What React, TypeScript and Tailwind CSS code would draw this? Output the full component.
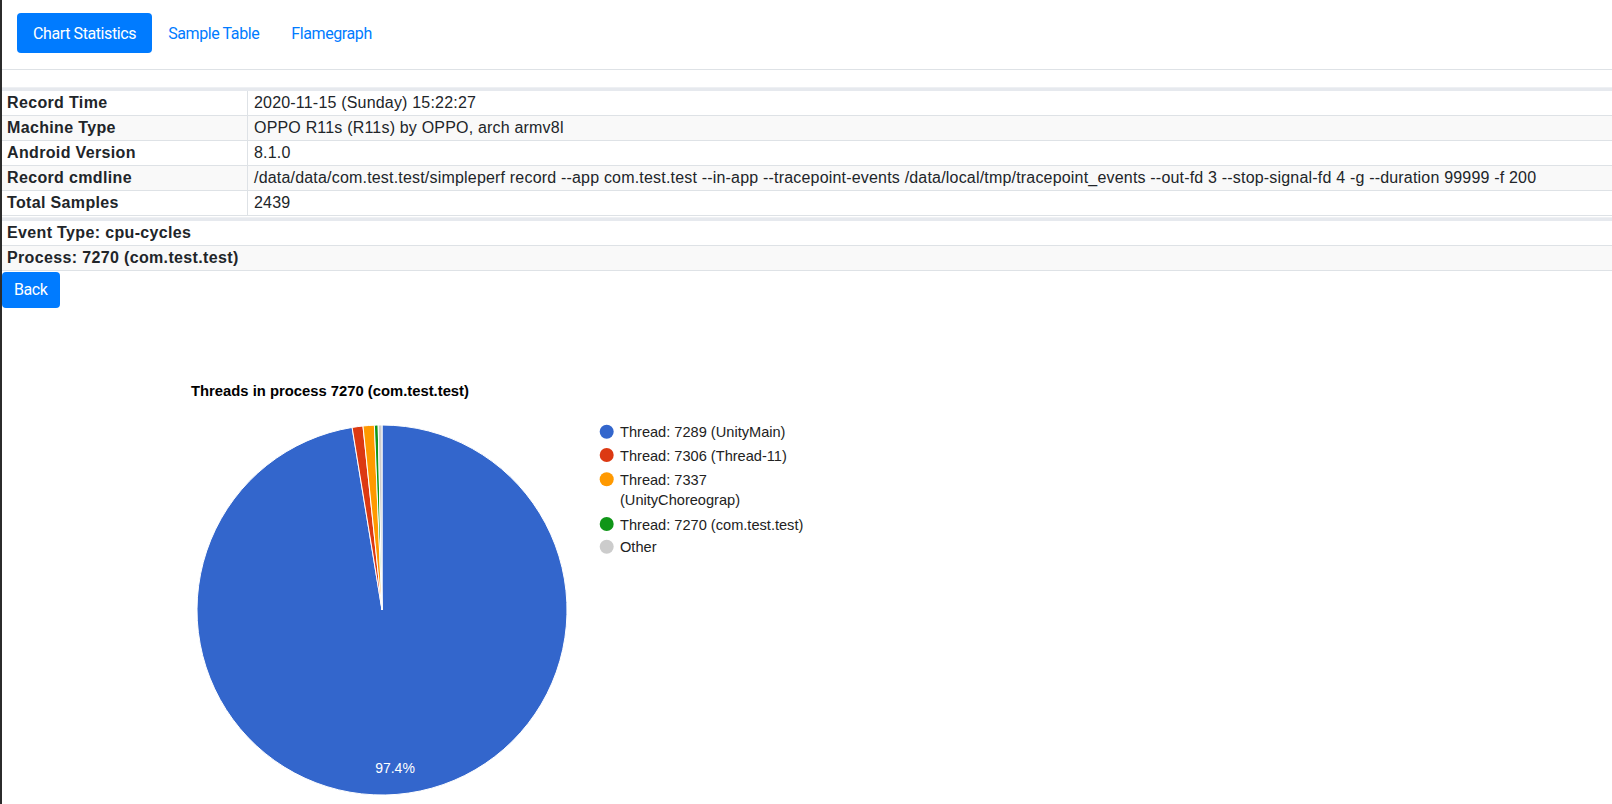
import React from "react";

const NAV_FONT = { fontFamily: "Roboto, 'Noto Sans', sans-serif", letterSpacing: "-0.4px" };

const recordRows = [
  ["Record Time", "2020-11-15 (Sunday) 15:22:27"],
  ["Machine Type", "OPPO R11s (R11s) by OPPO, arch armv8l"],
  ["Android Version", "8.1.0"],
  [
    "Record cmdline",
    "/data/data/com.test.test/simpleperf record --app com.test.test --in-app --tracepoint-events /data/local/tmp/tracepoint_events --out-fd 3 --stop-signal-fd 4 -g --duration 99999 -f 200",
  ],
  ["Total Samples", "2439"],
];

const slices = [
  { label: "Thread: 7289 (UnityMain)", lines: ["Thread: 7289 (UnityMain)"], value: 2376, color: "#3366cc" },
  { label: "Thread: 7306 (Thread-11)", lines: ["Thread: 7306 (Thread-11)"], value: 23, color: "#dc3912" },
  { label: "Thread: 7337 (UnityChoreograp)", lines: ["Thread: 7337", "(UnityChoreograp)"], value: 24, color: "#ff9900" },
  { label: "Thread: 7270 (com.test.test)", lines: ["Thread: 7270 (com.test.test)"], value: 8, color: "#109618" },
  { label: "Other", lines: ["Other"], value: 8, color: "#cccccc" },
];

function ThreadPie() {
  const cx = 380;
  const cy = 301;
  const r = 185;
  const total = slices.reduce((s, x) => s + x.value, 0);
  let acc = 0;
  const pt = (frac: number) => {
    const a = frac * Math.PI * 2;
    return [cx + r * Math.sin(a), cy - r * Math.cos(a)];
  };

  const paths = slices.map((s) => {
    const start = acc / total;
    acc += s.value;
    const end = acc / total;
    const [x1, y1] = pt(start);
    const [x2, y2] = pt(end);
    const large = end - start > 0.5 ? 1 : 0;
    return (
      <path
        key={s.label}
        d={`M${cx},${cy} L${x1},${y1} A${r},${r} 0 ${large} 1 ${x2},${y2} Z`}
        fill={s.color}
        stroke="#ffffff"
        strokeWidth={1}
      />
    );
  });

  // legend rows: circle centre y and text baselines
  const legend = [
    { cy: 122.7, base: [128.3] },
    { cy: 146, base: [151.5] },
    { cy: 170.3, base: [175.8, 195.8] },
    { cy: 215, base: [220.5] },
    { cy: 237.7, base: [243.2] },
  ];

  return (
    <svg width={900} height={490} className="mt-[1px] block" style={{ fontFamily: "'Liberation Sans', Arial, sans-serif" }}>
      <text x={189} y={87} fontSize={14.8} fontWeight="bold" fill="#000000">
        Threads in process 7270 (com.test.test)
      </text>
      {paths}
      <text x={393} y={464} fontSize={14} fill="#ffffff" textAnchor="middle">
        97.4%
      </text>
      {slices.map((s, i) => (
        <g key={s.label}>
          <circle cx={604.7} cy={legend[i].cy} r={7} fill={s.color} />
          {s.lines.map((ln, j) => (
            <text key={ln} x={618} y={legend[i].base[j]} fontSize={14.6} fill="#222222">
              {ln}
            </text>
          ))}
        </g>
      ))}
    </svg>
  );
}

function Row({ children, striped }: { children: React.ReactNode; striped: boolean }) {
  return (
    <div className={`flex h-[25px] border-b border-[#dee2e6] leading-[24px] ${striped ? "bg-[#f9f9f9]" : "bg-white"}`}>
      {children}
    </div>
  );
}

export default function App() {
  return (
    <div className="min-h-screen border-l-2 border-[#2b2b2b] bg-white text-[#212529]">
      <div className="flex border-b border-[#dee2e6] pl-[15px] pt-[13px] pb-[16px] text-[16px] leading-[24px]" style={NAV_FONT}>
        <span className="rounded-[4px] bg-[#007bff] px-4 pt-[9px] pb-[7px] text-white">Chart Statistics</span>
        <span className="px-4 pt-[9px] pb-[7px] text-[#007bff]">Sample Table</span>
        <span className="px-4 pt-[9px] pb-[7px] text-[#007bff]">Flamegraph</span>
      </div>

      <div className="mt-[17px] text-[16px]" style={{ fontFamily: "'Liberation Sans', Arial, sans-serif" }}>
        <div className="h-[4px] border-t border-[#eef0f3] bg-[#e6e9ee]" />
        {recordRows.map(([k, v], i) => (
          <Row key={k} striped={i % 2 === 1}>
            <div className="w-[245px] shrink-0 pl-[5px] font-bold tracking-[0.35px]">{k}</div>
            <div className="flex-1 truncate border-l border-[#dee2e6] pl-[6px] tracking-[0.19px]">{v}</div>
          </Row>
        ))}
        <div className="mt-[1px] h-[4px] border-t border-[#eef0f3] bg-[#e6e9ee]" />
        <Row striped={false}>
          <div className="pl-[5px] font-bold tracking-[0.35px]">Event Type: cpu-cycles</div>
        </Row>
        <Row striped>
          <div className="pl-[5px] font-bold tracking-[0.35px]">Process: 7270 (com.test.test)</div>
        </Row>
      </div>

      <div className="pt-[1px]">
        <button
          className="rounded-[4px] bg-[#007bff] px-3 py-[6px] text-[16px] leading-[24px] text-white"
          style={NAV_FONT}
        >
          Back
        </button>
      </div>

      <ThreadPie />
    </div>
  );
}
